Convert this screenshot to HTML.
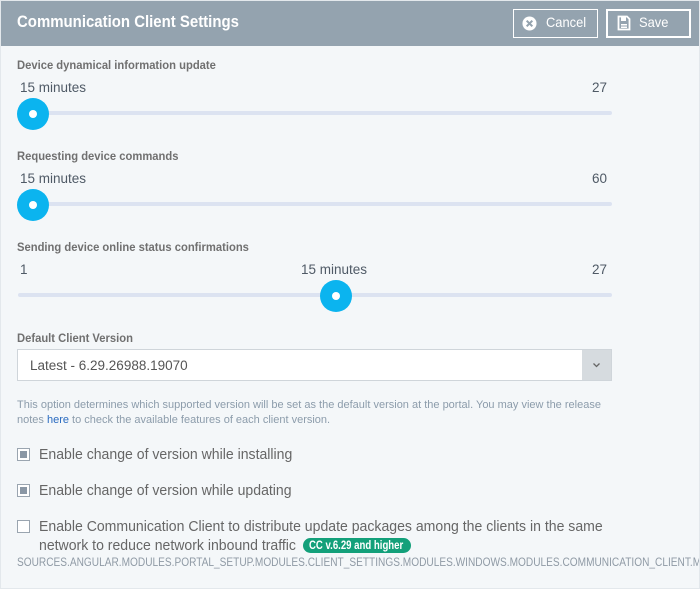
<!DOCTYPE html>
<html><head><meta charset="utf-8"><style>
*{margin:0;padding:0;box-sizing:border-box}
html,body{width:700px;height:589px;overflow:hidden}
body{background:#f4f7f9;font-family:"Liberation Sans",sans-serif;position:relative}
.wrap{position:absolute;left:0;top:0;width:700px;height:589px;overflow:hidden}
.frame{position:absolute;left:0;top:0;width:700px;height:589px;border:1px solid #e3e8ec;pointer-events:none}
.a{position:absolute;white-space:nowrap;transform-origin:0 50%}
.hdr{position:absolute;left:0;top:0;width:700px;height:46px;background:#94a3af}
.btn{position:absolute;border:2px solid #fff;color:#fff;font-size:14px}
.lbl{font-size:12px;font-weight:bold;color:#707070;transform:scaleX(.935)}
.val{font-size:13.5px;color:#4f5a66}
.track{position:absolute;left:18px;width:594px;height:4px;border-radius:2px;background:#dce3f1}
.thumb{position:absolute;width:32px;height:32px;border-radius:50%;background:#0bb4ef}
.thumb:after{content:"";position:absolute;left:12px;top:12px;width:8px;height:8px;border-radius:50%;background:#fff}
.cb{position:absolute;left:17px;width:13px;height:13px;border:1px solid #9aa5b0;background:#fff}
.cb.on:after{content:"";position:absolute;left:2px;top:2px;width:7px;height:7px;background:#8a97a5}
.ct{font-size:14.5px;color:#666;transform:scaleX(.97)}
</style></head><body><div class="wrap">
<div class="hdr"></div>
<div class="a" style="left:17px;top:12px;font-size:17px;font-weight:bold;color:#fff;transform:scaleX(.88)">Communication Client Settings</div>
<div class="btn" style="left:513px;top:9px;width:85px;height:29px;border-width:1px"></div>
<svg class="a" style="left:522px;top:16px" width="15" height="15" viewBox="0 0 16 16"><circle cx="8" cy="8" r="7.5" fill="#fff"/><path d="M5 5L11 11M11 5L5 11" stroke="#94a3af" stroke-width="2.2"/></svg>
<div class="a" style="left:546px;top:14px;font-size:14px;color:#fff;transform:scaleX(.92)">Cancel</div>
<div class="btn" style="left:606px;top:9px;width:85px;height:29px"></div>
<svg class="a" style="left:617px;top:15px" width="14" height="16" viewBox="0 0 14 16"><path d="M1.5 1.5H10L12.5 4V14.5H1.5Z" fill="none" stroke="#fff" stroke-width="1.8"/><rect x="4" y="2" width="5" height="4" fill="#fff"/><rect x="4" y="9" width="6" height="1.5" fill="#fff"/><rect x="4" y="11.5" width="6" height="1.5" fill="#fff"/></svg>
<div class="a" style="left:639px;top:14px;font-size:14px;color:#fff;transform:scaleX(.92)">Save</div>

<div class="a lbl" style="left:17px;top:58px">Device dynamical information update</div>
<div class="a val" style="left:20px;top:80px">15 minutes</div>
<div class="a val" style="left:592px;top:80px">27</div>
<div class="track" style="top:111px"></div>
<div class="thumb" style="left:17px;top:98px"></div>

<div class="a lbl" style="left:17px;top:149px">Requesting device commands</div>
<div class="a val" style="left:20px;top:171px">15 minutes</div>
<div class="a val" style="left:592px;top:171px">60</div>
<div class="track" style="top:202px"></div>
<div class="thumb" style="left:17px;top:189px"></div>

<div class="a lbl" style="left:17px;top:240px">Sending device online status confirmations</div>
<div class="a val" style="left:20px;top:262px">1</div>
<div class="a val" style="left:301px;top:262px">15 minutes</div>
<div class="a val" style="left:592px;top:262px">27</div>
<div class="track" style="top:293px"></div>
<div class="thumb" style="left:320px;top:280px"></div>

<div class="a lbl" style="left:17px;top:331px">Default Client Version</div>
<div style="position:absolute;left:17px;top:349px;width:595px;height:32px;border:1px solid #cfd5da;background:#fff"></div>
<div style="position:absolute;left:582px;top:350px;width:29px;height:30px;background:#d6dbdf"></div>
<svg class="a" style="left:592px;top:362px" width="9" height="7" viewBox="0 0 9 7"><path d="M1.5 1.5L4.5 4.5L7.5 1.5" fill="none" stroke="#666" stroke-width="1.3"/></svg>
<div class="a val" style="left:30px;top:358px;color:#555">Latest - 6.29.26988.19070</div>

<div class="a" style="left:17px;top:399px;font-size:11px;color:#8c9cab">This option determines which supported version will be set as the default version at the portal. You may view the release</div>
<div class="a" style="left:17px;top:414px;font-size:11px;color:#8c9cab">notes <span style="color:#2a6bc0">here</span> to check the available features of each client version.</div>

<div class="cb on" style="top:448px"></div>
<div class="a ct" style="left:39px;top:447px">Enable change of version while installing</div>
<div class="cb on" style="top:484px"></div>
<div class="a ct" style="left:39px;top:483px">Enable change of version while updating</div>
<div class="cb" style="top:520px"></div>
<div class="a ct" style="left:39px;top:519px">Enable Communication Client to distribute update packages among the clients in the same</div>
<div class="a ct" style="left:39px;top:538px">network to reduce network inbound traffic</div>
<div style="position:absolute;left:303px;top:538px;width:108px;height:15px;border-radius:8px;background:#13a07a"></div>
<div class="a" style="left:309px;top:538px;font-size:12px;font-weight:bold;color:#fff;transform:scaleX(.8);line-height:15px">CC v.6.29 and higher</div>
<div class="a" style="left:17px;top:557px;font-size:11.5px;color:#8f9aa5;transform:scaleX(.88)">SOURCES.ANGULAR.MODULES.PORTAL_SETUP.MODULES.CLIENT_SETTINGS.MODULES.WINDOWS.MODULES.COMMUNICATION_CLIENT.MODULES</div>
<div class="frame"></div>
</div></body></html>
